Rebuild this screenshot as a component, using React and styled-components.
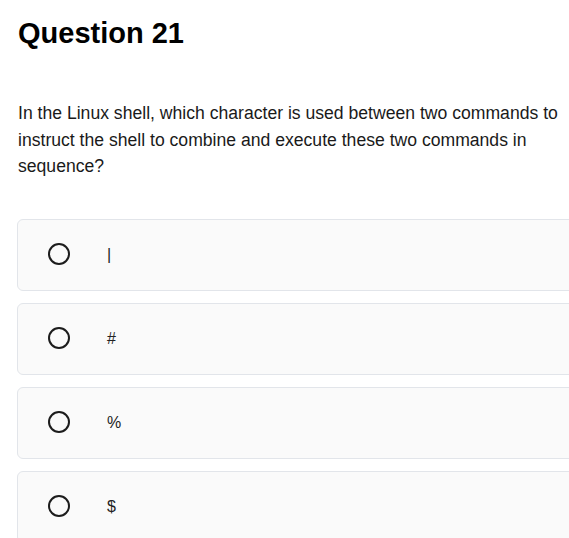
import React from 'react';
import styled, { createGlobalStyle } from 'styled-components';

const GlobalStyle = createGlobalStyle`
  html, body {
    margin: 0;
    padding: 0;
    background: #ffffff;
    overflow: hidden;
  }
  body {
    font-family: "Liberation Sans", Arial, sans-serif;
    color: #1a1a1a;
  }
`;

const options = ['|', '#', '%', '$'];

const App = () => (
  <>
    <GlobalStyle />
    <Page>
      <Title>Question 21</Title>
      <Prompt>
        In the Linux shell, which character is used between two commands to
        instruct the shell to combine and execute these two commands in
        sequence?
      </Prompt>
      <OptionList>
        {options.map((opt) => (
          <OptionCard key={opt}>
            <Radio />
            <OptionText>{opt}</OptionText>
          </OptionCard>
        ))}
      </OptionList>
    </Page>
  </>
);

const Page = styled.div`
  width: 600px;
  padding: 17px 0 0 17px;
  box-sizing: border-box;
`;

const Title = styled.h1`
  margin: 0;
  font-size: 29px;
  line-height: 33px;
  font-weight: 700;
  color: #000;
  padding-left: 1px;
`;

const Prompt = styled.p`
  margin: 50px 0 0;
  padding-left: 1px;
  font-size: 17.6px;
  line-height: 26.5px;
  color: #1a1a1a;
  width: 552px;
`;

const OptionList = styled.div`
  margin-top: 39px;
  display: flex;
  flex-direction: column;
  gap: 12px;
`;

const OptionCard = styled.div`
  display: flex;
  align-items: center;
  height: 72px;
  box-sizing: border-box;
  padding-left: 30px;
  background: #fafafa;
  border: 1px solid #e2e5ea;
  border-radius: 6px;
`;

const Radio = styled.span`
  width: 22px;
  height: 22px;
  box-sizing: border-box;
  border: 2.2px solid #1c1c1c;
  border-radius: 50%;
  margin-top: -2px;
  flex-shrink: 0;
`;

const OptionText = styled.span`
  margin-left: 37px;
  font-size: 16px;
  color: #222;
`;

export default App;
